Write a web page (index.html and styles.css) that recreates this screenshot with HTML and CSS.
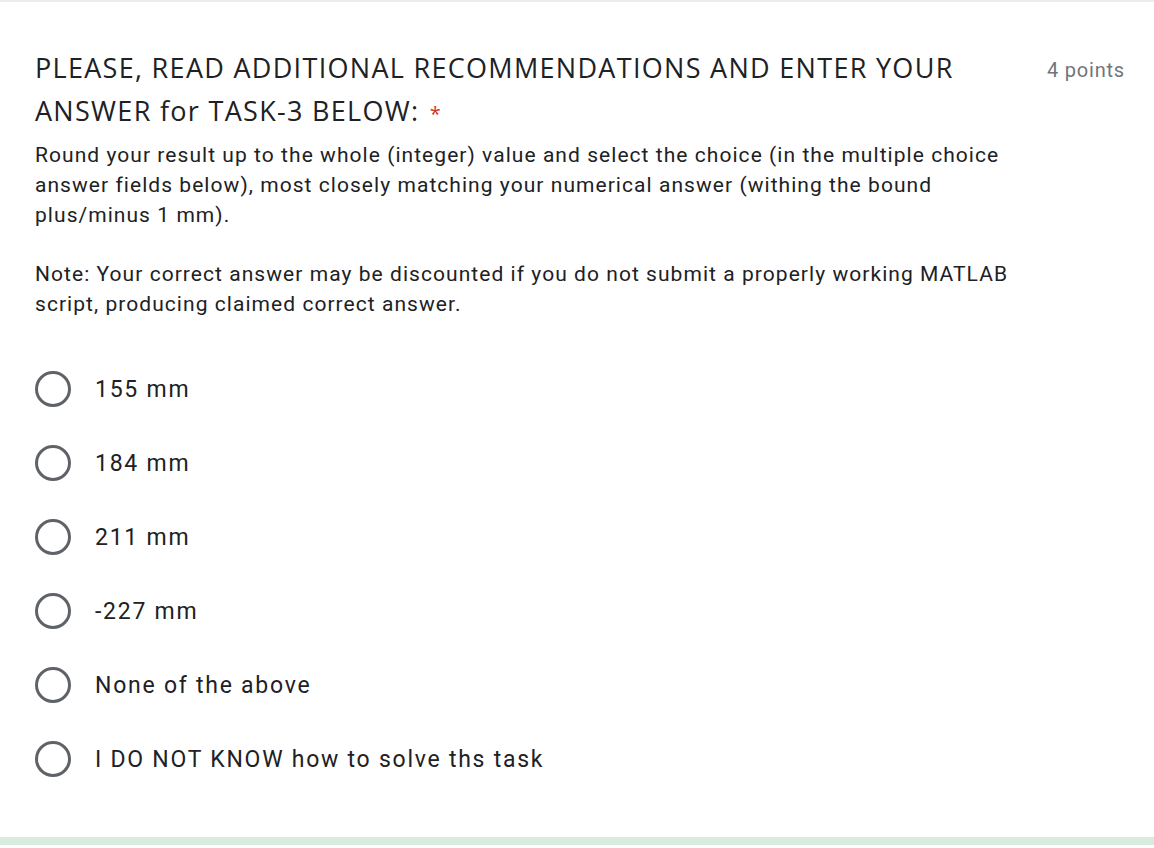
FILE: index.html
```html
<!DOCTYPE html>
<html>
<head>
<meta charset="utf-8">
<link rel="stylesheet" href="styles.css">
</head>
<body>
<div class="page">
  <div class="card">
    <div class="head">
      <div class="title">PLEASE, READ ADDITIONAL RECOMMENDATIONS AND ENTER YOUR ANSWER for TASK-3 BELOW: <span class="req">*</span></div>
      <div class="points">4 points</div>
    </div>
    <div class="desc">
      <p>Round your result up to the whole (integer) value and select the choice (in the multiple choice answer fields below), most closely matching your numerical answer (withing the bound plus/minus 1 mm).</p>
      <p>Note: Your correct answer may be discounted if you do not submit a properly working MATLAB script, producing claimed correct answer.</p>
    </div>
    <div class="options">
      <div class="opt"><span class="radio"></span><span class="label">155 mm</span></div>
      <div class="opt"><span class="radio"></span><span class="label">184 mm</span></div>
      <div class="opt"><span class="radio"></span><span class="label">211 mm</span></div>
      <div class="opt"><span class="radio"></span><span class="label">-227 mm</span></div>
      <div class="opt"><span class="radio"></span><span class="label">None of the above</span></div>
      <div class="opt"><span class="radio"></span><span class="label">I DO NOT KNOW how to solve ths task</span></div>
    </div>
  </div>
  <div class="strip"></div>
</div>
</body>
</html>
```
FILE: styles.css
```css
html, body {
  margin: 0;
  padding: 0;
  background: #fff;
}
.page {
  width: 1154px;
  height: 848px;
  display: flex;
  flex-direction: column;
  overflow: hidden;
}
.card {
  flex: 1;
  border-top: 2px solid #ececec;
  padding: 44px 29px 0 35px;
}
.head {
  display: flex;
  align-items: flex-start;
  justify-content: space-between;
}
.title {
  width: 980px;
  font-family: "Open Sans", sans-serif;
  font-size: 27px;
  line-height: 43px;
  color: #202124;
  letter-spacing: 1.3px;
}
.req {
  color: #d93025;
  font-size: 20px;
  line-height: 20px;
  letter-spacing: 0;
  margin-left: 2px;
}
.points {
  font-family: Roboto, sans-serif;
  font-size: 20px;
  letter-spacing: 0.8px;
  color: #70757a;
  padding-top: 12px;
}
.desc {
  margin-top: 8px;
  width: 990px;
  font-family: Roboto, sans-serif;
  font-size: 21px;
  letter-spacing: 1.05px;
  line-height: 30px;
  color: #202124;
}
.desc p {
  margin: 0 0 29px 0;
}
.options {
  display: flex;
  flex-direction: column;
  margin-top: 33px;
}
.opt {
  display: flex;
  align-items: center;
  height: 74px;
  gap: 24px;
}
.radio {
  width: 30px;
  height: 30px;
  border: 3px solid #5f6368;
  border-radius: 50%;
  flex-shrink: 0;
}
.label {
  font-family: Roboto, sans-serif;
  font-size: 23px;
  letter-spacing: 1.75px;
  color: #202124;
}
.strip {
  height: 8px;
  background: #d9ebdc;
  margin-bottom: 3px;
}
```
